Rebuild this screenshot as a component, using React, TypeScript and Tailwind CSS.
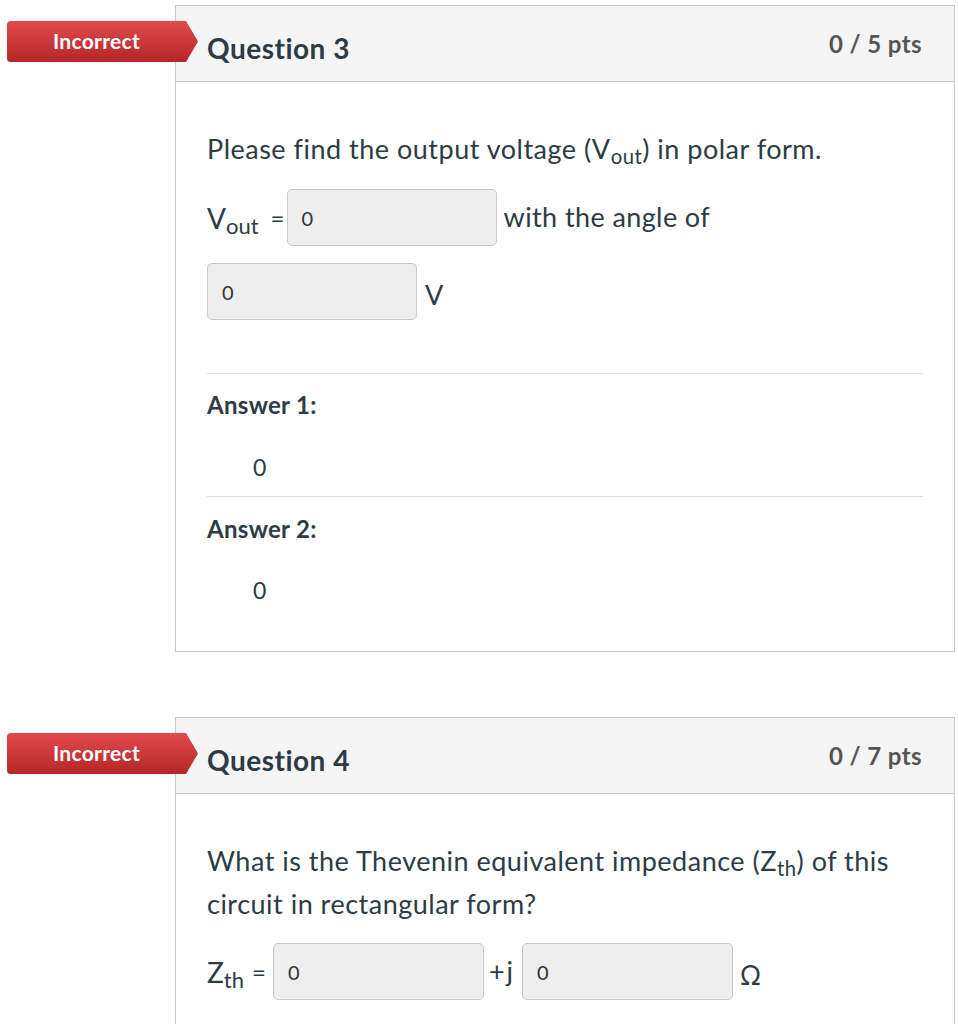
import React from "react";

const font = "font-['Lato','Liberation_Sans',sans-serif]";

function Badge() {
  return (
    <div className="absolute left-[-169px] top-[15px] h-[41px] w-[191px] rounded-l-[4px] bg-gradient-to-b from-[#e3494d] to-[#b42727] shadow-[0_1px_2px_rgba(0,0,0,0.3)] [clip-path:polygon(0_0,179px_0,191px_50%,179px_100%,0_100%)]">
      <div className="flex h-full w-[179px] items-center justify-center pb-[2px] text-[21px] font-bold tracking-[0.3px] text-white">
        Incorrect
      </div>
    </div>
  );
}

function Field({ w = "w-[210px]" }: { w?: string }) {
  return (
    <div
      className={`${w} flex h-[57px] shrink-0 items-center rounded-[5px] border border-[#c9c9c9] bg-[#eeeeee] pl-[14px] text-[20px] text-[#333]`}
    >
      0
    </div>
  );
}

function Card({
  title,
  pts,
  children,
  className = "",
}: {
  title: string;
  pts: string;
  children: React.ReactNode;
  className?: string;
}) {
  return (
    <div className={`relative ml-[175px] w-[780px] border border-[#c7c7c7] ${className}`}>
      <Badge />
      <div className="flex h-[76px] items-center justify-between border-b border-[#c7c7c7] bg-[#f5f5f5] pl-[31px] pr-[32px]">
        <h2 className="mt-[8px] text-[28px] font-bold tracking-[0.5px] text-[#2d3b45]">{title}</h2>
        <span className="text-[24px] font-bold tracking-[0.4px] text-[#555]">{pts}</span>
      </div>
      <div className="px-[31px]">{children}</div>
    </div>
  );
}

export default function App() {
  return (
    <div className={`${font} min-h-screen bg-white pt-[5px] text-[#2d3b45]`}>
      <Card title="Question 3" pts="0 / 5 pts">
        <p className="pt-[45px] text-[27px] leading-[43px] tracking-[0.5px]">
          Please find the output voltage (V<sub>out</sub>) in polar form.
        </p>
        <div className="mt-[19px] flex items-center">
          <span className="text-[28px] leading-none">
            V<sub className="text-[22px]">out</sub>
          </span>
          <span className="ml-[12px] mr-[2px] text-[24px]">=</span>
          <Field />
          <span className="ml-[7px] text-[27px] tracking-[0.4px]">with the angle of</span>
        </div>
        <div className="mt-[17px] flex items-center">
          <Field />
          <span className="ml-[8px] mt-[8px] text-[27px]">V</span>
        </div>
        <div className="mt-[53px] border-t border-[#dddddd]" />
        <div className="pt-[14px] text-[24px] font-bold leading-[33px] tracking-[0.3px]">
          Answer 1:
        </div>
        <div className="mt-[30px] pl-[46px] text-[23px] leading-[33px]">0</div>
        <div className="mt-[12px] border-t border-[#dddddd]" />
        <div className="pt-[15px] text-[24px] font-bold leading-[33px] tracking-[0.3px]">
          Answer 2:
        </div>
        <div className="mt-[29px] pl-[46px] text-[23px] leading-[33px]">0</div>
        <div className="h-[44px]" />
      </Card>

      <Card title="Question 4" pts="0 / 7 pts" className="mt-[65px]">
        <p className="pt-[45px] text-[27px] leading-[43px] tracking-[0.5px]">
          What is the Thevenin equivalent impedance (Z<sub>th</sub>) of this circuit in
          rectangular form?
        </p>
        <div className="mt-[18px] flex items-center pb-[30px]">
          <span className="text-[28px] leading-none">
            Z<sub className="text-[22px]">th</sub>
          </span>
          <span className="ml-[8px] mr-[7px] text-[24px]">=</span>
          <Field w="w-[211px]" />
          <span className="ml-[5px] mr-[7px] text-[27px] tracking-[2px]">+j</span>
          <Field w="w-[211px]" />
          <span className="ml-[7px] mt-[8px] text-[26px]">Ω</span>
        </div>
      </Card>
    </div>
  );
}
